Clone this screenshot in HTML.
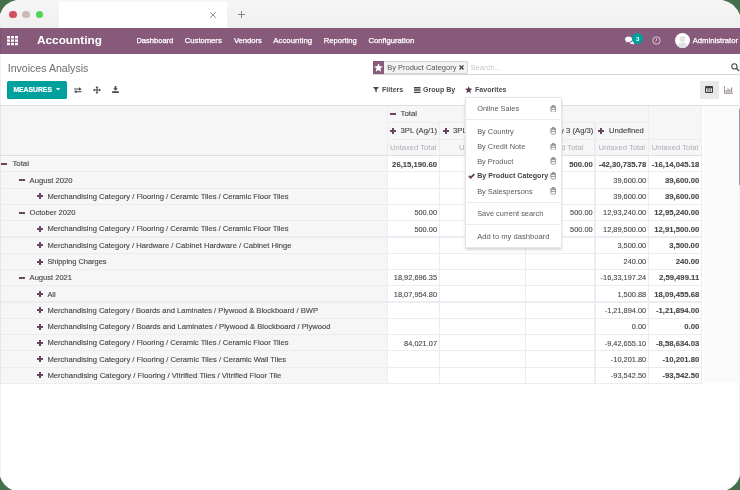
<!DOCTYPE html><html><head><meta charset="utf-8"><title>Invoices Analysis</title><style>
*{box-sizing:border-box;margin:0;padding:0}
html,body{width:740px;height:490px;overflow:hidden;background:#446f4c;font-family:"Liberation Sans",sans-serif;}
.win{position:absolute;left:0;top:0;width:740px;height:490px;background:#fff;clip-path:path('M0 13.9A22 22 0 0 1 16.3 0L722.5 0A24 24 0 0 1 740 15.1L740 475.7A22.5 22.5 0 0 1 726.8 490L12.2 490A23 23 0 0 1 0 476.7Z');overflow:hidden;will-change:transform;}
.a{position:absolute;white-space:nowrap;line-height:1;}
.tb{left:0;top:0;width:740px;height:28px;background:linear-gradient(#f6f6f6,#efefef);}
.tab{left:59px;top:2px;width:168px;height:26px;background:#fff;}
.dot{width:7.4px;height:7.4px;border-radius:50%;top:10.8px}
.nav{left:0;top:28px;width:740px;height:26px;background:#875a7b;}
.nt{color:#fff;font-size:7.6px;top:36.6px;-webkit-text-stroke:0.25px #fff}
.t{font-size:7.5px;color:#464646;-webkit-text-stroke:0.12px #464646}
.b{font-weight:bold}
.num.b{font-size:7.7px;padding-right:0}
.hd{background:#f6f6f6}
.ln{background:#eaedf2}
.num{font-size:7.4px;color:#464646;-webkit-text-stroke:0.1px #464646;text-align:right}
.mh{font-size:7.63px;color:#a9b0b8;text-align:center}
.ic{background:#694561}
.dd{left:464.8px;top:96.9px;width:97.4px;height:151.2px;background:#fff;border:1px solid #e6e6e6;border-radius:1.5px;box-shadow:0 1.5px 2.5px rgba(0,0,0,.16);}
.di{font-size:7.4px;color:#5a5a5a;left:477.2px}
</style></head><body><div class="win">
<div class="a tb"></div><div class="a tab"></div>
<div class="a dot" style="left:9.2px;background:#d1515f"></div>
<div class="a dot" style="left:22.4px;background:#cbbcb0"></div>
<div class="a dot" style="left:35.8px;background:#4fd650"></div>
<svg class="a" style="left:209px;top:11px" width="8" height="8" viewBox="0 0 8 8"><path d="M1.2 1.2L6.8 6.8M6.8 1.2L1.2 6.8" stroke="#7d8490" stroke-width="0.9" fill="none"/></svg>
<svg class="a" style="left:237px;top:10px" width="9" height="9" viewBox="0 0 9 9"><path d="M4.5 1V8M1 4.5H8" stroke="#808691" stroke-width="1" fill="none"/></svg>
<div class="a nav"></div>
<svg class="a" style="left:7px;top:36px" width="11" height="10" viewBox="0 0 11 10"><g fill="#fff"><rect x="0" y="0" width="3" height="2.4"/><rect x="4" y="0" width="3" height="2.4"/><rect x="8" y="0" width="3" height="2.4"/><rect x="0" y="3.4" width="3" height="2.4"/><rect x="4" y="3.4" width="3" height="2.4"/><rect x="8" y="3.4" width="3" height="2.4"/><rect x="0" y="6.8" width="3" height="2.4"/><rect x="4" y="6.8" width="3" height="2.4"/><rect x="8" y="6.8" width="3" height="2.4"/></g></svg>
<div class="a b" style="left:37px;top:34.6px;font-size:11.8px;color:#fff">Accounting</div>
<div class="a nt" style="left:136.4px;font-size:7.55px">Dashboard</div>
<div class="a nt" style="left:184.8px;font-size:7.65px">Customers</div>
<div class="a nt" style="left:233.9px;font-size:7.6px">Vendors</div>
<div class="a nt" style="left:273.2px;font-size:7.88px">Accounting</div>
<div class="a nt" style="left:323.8px;font-size:7.6px">Reporting</div>
<div class="a nt" style="left:368.5px;font-size:7.7px">Configuration</div>
<svg class="a" style="left:625px;top:36px" width="10" height="9" viewBox="0 0 10 9"><path d="M0 3.2C0 1.6 1.6 0.4 3.6 0.4S7.2 1.6 7.2 3.2 5.6 6 3.6 6C3.2 6 2.9 6 2.6 5.9L1 6.8 1.5 5.4C0.6 4.9 0 4.1 0 3.2Z" fill="#fff"/><path d="M8 3.4C9.2 3.8 10 4.6 10 5.6 10 6.4 9.5 7 8.8 7.4L9.2 8.6 7.8 7.9C7.5 8 7.2 8 6.9 8 5.7 8 4.7 7.5 4.2 6.8 6.3 6.6 8 5.2 8 3.4Z" fill="#fff"/></svg>
<div class="a" style="left:632.2px;top:33.3px;width:11.2px;height:11.2px;border-radius:50%;background:#00a09d"></div>
<div class="a b" style="left:632.2px;top:35.8px;width:11.2px;text-align:center;font-size:6.2px;color:#fff">3</div>
<svg class="a" style="left:651.5px;top:36px" width="9" height="9" viewBox="0 0 9 9"><circle cx="4.5" cy="4.5" r="3.7" stroke="#e4d6e0" stroke-width="0.9" fill="none"/><path d="M4.5 2.3V4.6L3.2 5.6" stroke="#e4d6e0" stroke-width="0.8" fill="none"/></svg>
<div class="a" style="left:675px;top:33px;width:15px;height:15px;border-radius:50%;background:#fff;overflow:hidden"><svg width="15" height="15" viewBox="0 0 15 15"><circle cx="7.5" cy="6" r="2.9" fill="#e2e2e2"/><path d="M2.2 15C2.2 11 4.5 9.6 7.5 9.6S12.8 11 12.8 15Z" fill="#e2e2e2"/></svg></div>
<div class="a nt" style="left:692.7px;font-size:7.7px">Administrator</div>
<div class="a" style="left:7.7px;top:62.8px;font-size:10.6px;color:#6e6e6e">Invoices Analysis</div>
<div class="a" style="left:7px;top:81px;width:60px;height:17.6px;background:#00a09d;border-radius:1.5px"></div>
<div class="a b" style="left:13.4px;top:87.2px;font-size:6.8px;color:#fff;-webkit-text-stroke:0.2px #fff">MEASURES</div>
<svg class="a" style="left:56.4px;top:88.4px" width="4.2" height="2.6" viewBox="0 0 5 3"><path d="M0 0H5L2.5 3Z" fill="#fff"/></svg>
<svg class="a" style="left:74.3px;top:86.8px" width="7.6" height="6.7" viewBox="0 0 9 8"><path d="M0 2.4H7M9 5.6H2" stroke="#444" stroke-width="1.2" fill="none"/><path d="M6 0.4L9 2.4 6 4.4ZM3 3.6L0 5.6 3 7.6Z" fill="#444"/></svg>
<svg class="a" style="left:93px;top:85.8px" width="8" height="8" viewBox="0 0 9 9"><path d="M4.5 1V8M1 4.5H8" stroke="#444" stroke-width="1.15" fill="none"/><path d="M4.5 0L6.2 2H2.8ZM4.5 9L6.2 7H2.8ZM0 4.5L2 2.8V6.2ZM9 4.5L7 2.8V6.2Z" fill="#444"/></svg>
<svg class="a" style="left:111.6px;top:85.8px" width="7" height="7.6" viewBox="0 0 8 9"><path d="M3 0H5V2.8H6.8L4 5.6 1.2 2.8H3Z" fill="#4c4c4c"/><path d="M0 6.2H8V8.6H0Z" fill="#4c4c4c"/></svg>
<div class="a" style="left:373px;top:61px;width:94.5px;height:12.8px;border:1px solid #d5d5d5;background:#f3f3f3;border-radius:1px"></div>
<div class="a" style="left:373px;top:61px;width:11px;height:12.8px;background:#875a7b"></div>
<svg class="a" style="left:374px;top:62.9px" width="9" height="9" viewBox="0 0 10 10"><path d="M5 0.3L6.4 3.5 9.9 3.8 7.2 6.1 8 9.6 5 7.7 2 9.6 2.8 6.1 0.1 3.8 3.6 3.5Z" fill="#fff"/></svg>
<div class="a" style="left:387.2px;top:63.8px;font-size:7.5px;color:#555">By Product Category</div>
<svg class="a" style="left:458.6px;top:64.8px" width="5" height="5" viewBox="0 0 5 5"><path d="M0.5 0.5L4.5 4.5M4.5 0.5L0.5 4.5" stroke="#3c3c3c" stroke-width="1.2" fill="none"/></svg>
<div class="a" style="left:470.6px;top:63.8px;font-size:7.5px;color:#c4c8cc">Search...</div>
<div class="a" style="left:373px;top:74.4px;width:366px;height:1px;background:#d6d6d6"></div>
<svg class="a" style="left:731px;top:63px;z-index:3" width="9" height="9" viewBox="0 0 9 9"><circle cx="3.4" cy="3.4" r="2.6" stroke="#4c4c4c" stroke-width="1.1" fill="none"/><path d="M5.3 5.3L8 8" stroke="#4c4c4c" stroke-width="1.3"/></svg>
<svg class="a" style="left:373.4px;top:86.6px" width="6" height="6" viewBox="0 0 6 6"><path d="M0 0H6L3.7 2.8V5.6L2.3 4.6V2.8Z" fill="#5b3a55"/></svg>
<div class="a b" style="left:382px;top:86.9px;font-size:7.1px;color:#4c4c4c">Filters</div>
<svg class="a" style="left:414px;top:86.8px" width="6.5" height="6" viewBox="0 0 6.5 6"><path d="M0 0.7H6.5M0 3H6.5M0 5.3H6.5" stroke="#444" stroke-width="1.35" fill="none"/></svg>
<div class="a b" style="left:423px;top:86.9px;font-size:7.1px;color:#4c4c4c">Group By</div>
<svg class="a" style="left:465.4px;top:85.8px" width="7.4" height="7.4" viewBox="0 0 10 10"><path d="M5 0.3L6.4 3.5 9.9 3.8 7.2 6.1 8 9.6 5 7.7 2 9.6 2.8 6.1 0.1 3.8 3.6 3.5Z" fill="#5b3a55"/></svg>
<div class="a b" style="left:475px;top:86.9px;font-size:7.1px;color:#4c4c4c">Favorites</div>
<div class="a" style="left:700px;top:81px;width:18.5px;height:17.6px;background:#e9e9e9"></div>
<svg class="a" style="left:705.4px;top:86px" width="8" height="7" viewBox="0 0 8 7"><rect x="0" y="0" width="8" height="7" rx="1" fill="#3f3f3f"/><path d="M1 2.2H2.5V5.9H1ZM3.3 2.2H4.7V5.9H3.3ZM5.5 2.2H7V5.9H5.5Z" fill="#dcdcdc"/></svg>
<svg class="a" style="left:724px;top:85.6px" width="9" height="8" viewBox="0 0 9 8"><path d="M0.5 0V7.4H9" stroke="#8a7d8a" stroke-width="0.8" fill="none"/><path d="M2.2 4V6.6M4 2.4V6.6M5.8 3.4V6.6M7.6 1.4V6.6" stroke="#8a7d8a" stroke-width="1"/></svg>
<div class="a" style="left:0;top:105px;width:740px;height:1px;background:#dedede"></div>
<div class="a hd" style="left:0;top:106px;width:701.5px;height:49.599999999999994px"></div>
<div class="a hd" style="left:0;top:155.6px;width:387px;height:227.78px"></div>
<div class="a" style="left:703.5px;top:106px;width:35.2px;height:277.38px;background:#fbfafa"></div>
<div class="a ln" style="left:387px;top:121.6px;width:261.5px;height:1.15px"></div>
<div class="a ln" style="left:387px;top:138.6px;width:314.5px;height:1.15px"></div>
<div class="a ln" style="left:0px;top:155.04999999999998px;width:701.5px;height:1.15px"></div>
<div class="a" style="left:0;top:155.04999999999998px;width:701.5px;height:1.15px;background:#dfdfdf"></div>
<div class="a ln" style="left:0px;top:171.32px;width:701.5px;height:1.15px"></div>
<div class="a ln" style="left:0px;top:187.58999999999997px;width:701.5px;height:1.15px"></div>
<div class="a ln" style="left:0px;top:203.85999999999999px;width:701.5px;height:1.15px"></div>
<div class="a ln" style="left:0px;top:220.13px;width:701.5px;height:1.15px"></div>
<div class="a ln" style="left:0px;top:236.39999999999998px;width:701.5px;height:1.15px"></div>
<div class="a ln" style="left:0px;top:252.67px;width:701.5px;height:1.15px"></div>
<div class="a ln" style="left:0px;top:268.94px;width:701.5px;height:1.15px"></div>
<div class="a ln" style="left:0px;top:285.21px;width:701.5px;height:1.15px"></div>
<div class="a ln" style="left:0px;top:301.47999999999996px;width:701.5px;height:1.15px"></div>
<div class="a ln" style="left:0px;top:317.74999999999994px;width:701.5px;height:1.15px"></div>
<div class="a ln" style="left:0px;top:334.02px;width:701.5px;height:1.15px"></div>
<div class="a ln" style="left:0px;top:350.29px;width:701.5px;height:1.15px"></div>
<div class="a ln" style="left:0px;top:366.56px;width:701.5px;height:1.15px"></div>
<div class="a ln" style="left:0px;top:382.83px;width:701.5px;height:1.15px"></div>
<div class="a ln" style="left:386.6px;top:106px;width:1.15px;height:277.38px"></div>
<div class="a ln" style="left:438.75px;top:122px;width:1.15px;height:261.38px"></div>
<div class="a ln" style="left:524.85px;top:122px;width:1.15px;height:261.38px"></div>
<div class="a ln" style="left:594.45px;top:122px;width:1.15px;height:261.38px"></div>
<div class="a ln" style="left:647.95px;top:106px;width:1.15px;height:277.38px"></div>
<div class="a ln" style="left:700.95px;top:106px;width:1.15px;height:277.38px"></div>
<div class="a ic" style="left:390px;top:113px;width:6px;height:1.7px"></div>
<div class="a t" style="left:400.5px;top:109.9px;font-size:7.8px">Total</div>
<div class="a ic" style="left:390px;top:130px;width:6px;height:1.7px"></div>
<div class="a ic" style="left:392px;top:127.85px;width:1.7px;height:6px"></div>
<div class="a t" style="left:400.5px;top:126.6px;font-size:7.7px">3PL (Ag/1)</div>
<div class="a ic" style="left:442.5px;top:130px;width:6px;height:1.7px"></div>
<div class="a ic" style="left:445px;top:127.85px;width:1.7px;height:6px"></div>
<div class="a t" style="left:453px;top:126.6px;font-size:7.7px">3PL (Ag/2)</div>
<div class="a t" style="right:146.6px;top:126.7px;font-size:7.7px">Party 3 (Ag/3)</div>
<div class="a ic" style="left:598px;top:130px;width:6px;height:1.7px"></div>
<div class="a ic" style="left:600px;top:127.85px;width:1.7px;height:6px"></div>
<div class="a t" style="left:609px;top:126.6px;font-size:7.6px">Undefined</div>
<div class="a mh" style="left:387.0px;top:143.6px;width:52.30000000000001px">Untaxed Total</div>
<div class="a mh" style="left:439.3px;top:143.6px;width:86.09999999999997px">Untaxed Total</div>
<div class="a mh" style="left:525.4px;top:143.6px;width:69.60000000000002px">Untaxed Total</div>
<div class="a mh" style="left:595.0px;top:143.6px;width:53.5px">Untaxed Total</div>
<div class="a mh" style="left:648.5px;top:143.6px;width:53.0px">Untaxed Total</div>
<div class="a ic" style="left:1.4px;top:163px;width:6px;height:1.7px"></div>
<div class="a t" style="left:12.4px;top:160.4px;font-size:7.875px">Total</div>
<div class="a num b" style="left:387.0px;top:160.55px;width:50.0px">26,15,190.60</div>
<div class="a num b" style="left:525.4px;top:160.55px;width:67.3px">500.00</div>
<div class="a num b" style="left:595.0px;top:160.55px;width:51.2px">-42,30,735.78</div>
<div class="a num b" style="left:648.5px;top:160.55px;width:50.7px">-16,14,045.18</div>
<div class="a ic" style="left:19.2px;top:179px;width:6px;height:1.7px"></div>
<div class="a t" style="left:29.6px;top:176.67px;font-size:7.65px">August 2020</div>
<div class="a num" style="left:595.0px;top:176.82px;width:51.2px">39,600.00</div>
<div class="a num b" style="left:648.5px;top:176.82px;width:50.7px">39,600.00</div>
<div class="a ic" style="left:36.6px;top:195px;width:6px;height:1.7px"></div>
<div class="a ic" style="left:39px;top:192.85px;width:1.7px;height:6px"></div>
<div class="a t" style="left:47.4px;top:192.94px;font-size:7.639px">Merchandising Category / Flooring / Ceramic Tiles / Ceramic Floor Tiles</div>
<div class="a num" style="left:595.0px;top:193.09px;width:51.2px">39,600.00</div>
<div class="a num b" style="left:648.5px;top:193.09px;width:50.7px">39,600.00</div>
<div class="a ic" style="left:19.2px;top:212px;width:6px;height:1.7px"></div>
<div class="a t" style="left:29.6px;top:209.21px;font-size:7.567px">October 2020</div>
<div class="a num" style="left:387.0px;top:209.36px;width:50.0px">500.00</div>
<div class="a num" style="left:525.4px;top:209.36px;width:67.3px">500.00</div>
<div class="a num" style="left:595.0px;top:209.36px;width:51.2px">12,93,240.00</div>
<div class="a num b" style="left:648.5px;top:209.36px;width:50.7px">12,95,240.00</div>
<div class="a ic" style="left:36.6px;top:228px;width:6px;height:1.7px"></div>
<div class="a ic" style="left:39px;top:225.85px;width:1.7px;height:6px"></div>
<div class="a t" style="left:47.4px;top:225.48px;font-size:7.639px">Merchandising Category / Flooring / Ceramic Tiles / Ceramic Floor Tiles</div>
<div class="a num" style="left:387.0px;top:225.63px;width:50.0px">500.00</div>
<div class="a num" style="left:525.4px;top:225.63px;width:67.3px">500.00</div>
<div class="a num" style="left:595.0px;top:225.63px;width:51.2px">12,89,500.00</div>
<div class="a num b" style="left:648.5px;top:225.63px;width:50.7px">12,91,500.00</div>
<div class="a ic" style="left:36.6px;top:244px;width:6px;height:1.7px"></div>
<div class="a ic" style="left:39px;top:241.85px;width:1.7px;height:6px"></div>
<div class="a t" style="left:47.4px;top:241.75px;font-size:7.612px">Merchandising Category / Hardware / Cabinet Hardware / Cabinet Hinge</div>
<div class="a num" style="left:595.0px;top:241.9px;width:51.2px">3,500.00</div>
<div class="a num b" style="left:648.5px;top:241.9px;width:50.7px">3,500.00</div>
<div class="a ic" style="left:36.6px;top:261px;width:6px;height:1.7px"></div>
<div class="a ic" style="left:39px;top:258.85px;width:1.7px;height:6px"></div>
<div class="a t" style="left:47.4px;top:258.02px;font-size:7.44px">Shipping Charges</div>
<div class="a num" style="left:595.0px;top:258.17px;width:51.2px">240.00</div>
<div class="a num b" style="left:648.5px;top:258.17px;width:50.7px">240.00</div>
<div class="a ic" style="left:19.2px;top:277px;width:6px;height:1.7px"></div>
<div class="a t" style="left:29.6px;top:274.29px;font-size:7.552px">August 2021</div>
<div class="a num" style="left:387.0px;top:274.44px;width:50.0px">18,92,696.35</div>
<div class="a num" style="left:595.0px;top:274.44px;width:51.2px">-16,33,197.24</div>
<div class="a num b" style="left:648.5px;top:274.44px;width:50.7px">2,59,499.11</div>
<div class="a ic" style="left:36.6px;top:293px;width:6px;height:1.7px"></div>
<div class="a ic" style="left:39px;top:290.85px;width:1.7px;height:6px"></div>
<div class="a t" style="left:47.4px;top:290.56px;font-size:7.35px">All</div>
<div class="a num" style="left:387.0px;top:290.71px;width:50.0px">18,07,954.80</div>
<div class="a num" style="left:595.0px;top:290.71px;width:51.2px">1,500.88</div>
<div class="a num b" style="left:648.5px;top:290.71px;width:50.7px">18,09,455.68</div>
<div class="a ic" style="left:36.6px;top:309px;width:6px;height:1.7px"></div>
<div class="a ic" style="left:39px;top:306.85px;width:1.7px;height:6px"></div>
<div class="a t" style="left:47.4px;top:306.83px;font-size:7.609px">Merchandising Category / Boards and Laminates / Plywood &amp; Blockboard / BWP</div>
<div class="a num" style="left:595.0px;top:306.98px;width:51.2px">-1,21,894.00</div>
<div class="a num b" style="left:648.5px;top:306.98px;width:50.7px">-1,21,894.00</div>
<div class="a ic" style="left:36.6px;top:326px;width:6px;height:1.7px"></div>
<div class="a ic" style="left:39px;top:323.85px;width:1.7px;height:6px"></div>
<div class="a t" style="left:47.4px;top:323.1px;font-size:7.637px">Merchandising Category / Boards and Laminates / Plywood &amp; Blockboard / Plywood</div>
<div class="a num" style="left:595.0px;top:323.25px;width:51.2px">0.00</div>
<div class="a num b" style="left:648.5px;top:323.25px;width:50.7px">0.00</div>
<div class="a ic" style="left:36.6px;top:342px;width:6px;height:1.7px"></div>
<div class="a ic" style="left:39px;top:339.85px;width:1.7px;height:6px"></div>
<div class="a t" style="left:47.4px;top:339.37px;font-size:7.639px">Merchandising Category / Flooring / Ceramic Tiles / Ceramic Floor Tiles</div>
<div class="a num" style="left:387.0px;top:339.52px;width:50.0px">84,021.07</div>
<div class="a num" style="left:595.0px;top:339.52px;width:51.2px">-9,42,655.10</div>
<div class="a num b" style="left:648.5px;top:339.52px;width:50.7px">-8,58,634.03</div>
<div class="a ic" style="left:36.6px;top:358px;width:6px;height:1.7px"></div>
<div class="a ic" style="left:39px;top:355.85px;width:1.7px;height:6px"></div>
<div class="a t" style="left:47.4px;top:355.64px;font-size:7.65px">Merchandising Category / Flooring / Ceramic Tiles / Ceramic Wall Tiles</div>
<div class="a num" style="left:595.0px;top:355.79px;width:51.2px">-10,201.80</div>
<div class="a num b" style="left:648.5px;top:355.79px;width:50.7px">-10,201.80</div>
<div class="a ic" style="left:36.6px;top:374px;width:6px;height:1.7px"></div>
<div class="a ic" style="left:39px;top:371.85px;width:1.7px;height:6px"></div>
<div class="a t" style="left:47.4px;top:371.91px;font-size:7.725px">Merchandising Category / Flooring / Vitrified Tiles / Vitrified Floor Tile</div>
<div class="a num" style="left:595.0px;top:372.06px;width:51.2px">-93,542.50</div>
<div class="a num b" style="left:648.5px;top:372.06px;width:50.7px">-93,542.50</div>
<div class="a dd"></div>
<div class="a di" style="top:105.2px">Online Sales</div>
<svg class="a" style="left:549.9px;top:104.8px" width="6.6" height="7.6" viewBox="0 0 6.6 7.6"><path d="M0.3 1.9C1.5 1.3 5.1 1.3 6.3 1.9M2.3 1.3V0.5H4.3V1.3" stroke="#777" stroke-width="0.8" fill="none"/><path d="M0.9 2.6V5.8C0.9 6.8 1.8 7.2 3.3 7.2S5.7 6.8 5.7 5.8V2.6Z" stroke="#777" stroke-width="0.8" fill="none"/><path d="M1 4.5H5.6" stroke="#777" stroke-width="0.7"/></svg>
<div class="a di" style="top:127.7px">By Country</div>
<svg class="a" style="left:549.9px;top:127.3px" width="6.6" height="7.6" viewBox="0 0 6.6 7.6"><path d="M0.3 1.9C1.5 1.3 5.1 1.3 6.3 1.9M2.3 1.3V0.5H4.3V1.3" stroke="#777" stroke-width="0.8" fill="none"/><path d="M0.9 2.6V5.8C0.9 6.8 1.8 7.2 3.3 7.2S5.7 6.8 5.7 5.8V2.6Z" stroke="#777" stroke-width="0.8" fill="none"/><path d="M1 4.5H5.6" stroke="#777" stroke-width="0.7"/></svg>
<div class="a di" style="top:142.9px">By Credit Note</div>
<svg class="a" style="left:549.9px;top:142.5px" width="6.6" height="7.6" viewBox="0 0 6.6 7.6"><path d="M0.3 1.9C1.5 1.3 5.1 1.3 6.3 1.9M2.3 1.3V0.5H4.3V1.3" stroke="#777" stroke-width="0.8" fill="none"/><path d="M0.9 2.6V5.8C0.9 6.8 1.8 7.2 3.3 7.2S5.7 6.8 5.7 5.8V2.6Z" stroke="#777" stroke-width="0.8" fill="none"/><path d="M1 4.5H5.6" stroke="#777" stroke-width="0.7"/></svg>
<div class="a di" style="top:157.7px">By Product</div>
<svg class="a" style="left:549.9px;top:157.3px" width="6.6" height="7.6" viewBox="0 0 6.6 7.6"><path d="M0.3 1.9C1.5 1.3 5.1 1.3 6.3 1.9M2.3 1.3V0.5H4.3V1.3" stroke="#777" stroke-width="0.8" fill="none"/><path d="M0.9 2.6V5.8C0.9 6.8 1.8 7.2 3.3 7.2S5.7 6.8 5.7 5.8V2.6Z" stroke="#777" stroke-width="0.8" fill="none"/><path d="M1 4.5H5.6" stroke="#777" stroke-width="0.7"/></svg>
<div class="a di b" style="top:173.0px;color:#444;font-size:7.15px">By Product Category</div>
<svg class="a" style="left:549.9px;top:172.3px" width="6.6" height="7.6" viewBox="0 0 6.6 7.6"><path d="M0.3 1.9C1.5 1.3 5.1 1.3 6.3 1.9M2.3 1.3V0.5H4.3V1.3" stroke="#777" stroke-width="0.8" fill="none"/><path d="M0.9 2.6V5.8C0.9 6.8 1.8 7.2 3.3 7.2S5.7 6.8 5.7 5.8V2.6Z" stroke="#777" stroke-width="0.8" fill="none"/><path d="M1 4.5H5.6" stroke="#777" stroke-width="0.7"/></svg>
<svg class="a" style="left:467.8px;top:173px" width="7.2" height="6" viewBox="0 0 7.2 6"><path d="M0.9 3L2.7 4.7 6.3 1" stroke="#643f5c" stroke-width="1.8" fill="none"/></svg>
<div class="a di" style="top:187.7px">By Salespersons</div>
<svg class="a" style="left:549.9px;top:187.3px" width="6.6" height="7.6" viewBox="0 0 6.6 7.6"><path d="M0.3 1.9C1.5 1.3 5.1 1.3 6.3 1.9M2.3 1.3V0.5H4.3V1.3" stroke="#777" stroke-width="0.8" fill="none"/><path d="M0.9 2.6V5.8C0.9 6.8 1.8 7.2 3.3 7.2S5.7 6.8 5.7 5.8V2.6Z" stroke="#777" stroke-width="0.8" fill="none"/><path d="M1 4.5H5.6" stroke="#777" stroke-width="0.7"/></svg>
<div class="a di" style="top:210.1px">Save current search</div>
<div class="a di" style="top:233.0px"><span style="font-size:7.6px">Add to my dashboard</span></div>
<div class="a" style="left:466px;top:119.2px;width:95.5px;height:1px;background:#ececec"></div>
<div class="a" style="left:466px;top:202.1px;width:95.5px;height:1px;background:#ececec"></div>
<div class="a" style="left:466px;top:224.1px;width:95.5px;height:1px;background:#ececec"></div>
<div class="a" style="left:0;top:28px;width:1px;height:462px;background:rgba(0,0,0,.06)"></div>
<div class="a" style="left:738.7px;top:54px;width:1.3px;height:436px;background:#f0f2f4"></div>
<div class="a" style="left:738.6px;top:109px;width:1.4px;height:76px;background:#9599a6"></div>
</div></body></html>
